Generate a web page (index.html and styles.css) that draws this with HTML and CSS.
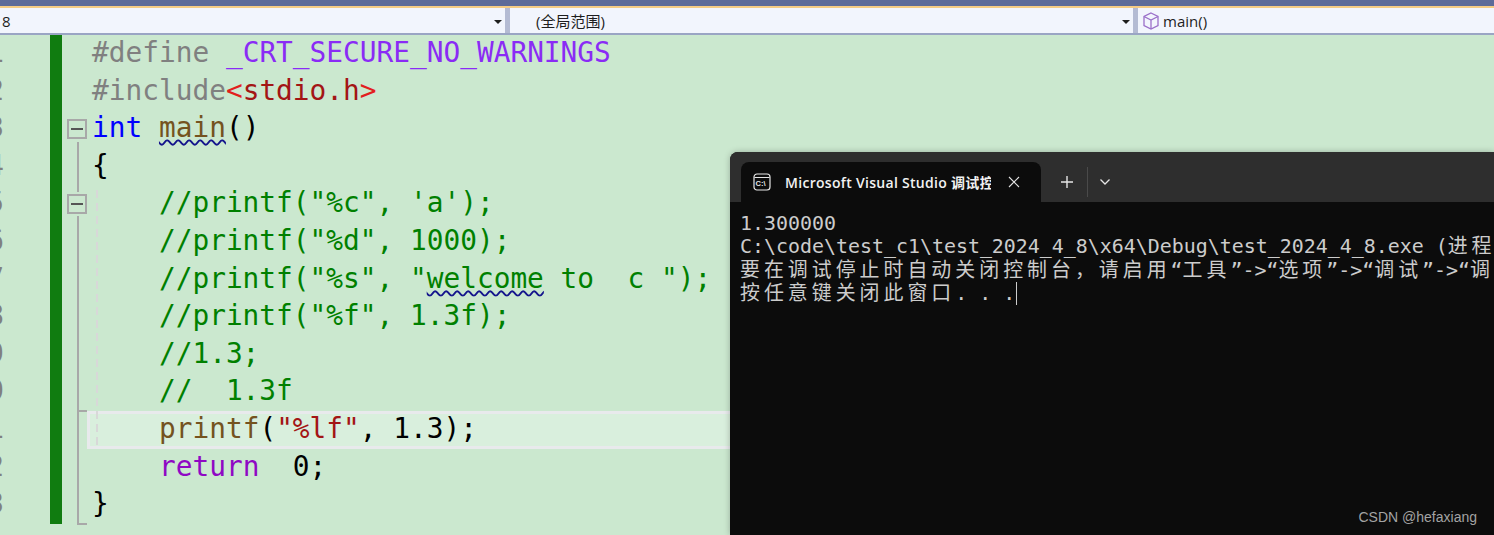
FILE: index.html
```html
<!DOCTYPE html>
<html lang="zh-CN">
<head>
<meta charset="utf-8">
<title>Visual Studio</title>
<link rel="stylesheet" href="styles.css">
</head>
<body>
<div class="topbar"></div>
<div class="navbar">
  <div class="combo combo-file"><span class="combo-text first">8</span><span class="arrow"></span></div>
  <div class="combo combo-scope"><span class="combo-text scope">(全局范围)</span><span class="arrow"></span></div>
  <div class="combo combo-member">
    <svg class="cube" width="16" height="18" viewBox="0 0 16 18" fill="none" stroke="#9a6fc9" stroke-width="1.3"><path d="M8 1 L15 4.5 V13.5 L8 17 L1 13.5 V4.5 Z"/><path d="M1 4.5 L8 8 L15 4.5 M8 8 V17"/></svg>
    <span class="combo-text">main()</span>
  </div>
</div>
<main class="editor">
  <div class="numbers">
    <div class="num">1</div><div class="num">2</div><div class="num">3</div><div class="num">4</div><div class="num">5</div><div class="num">6</div><div class="num">7</div><div class="num">8</div><div class="num">9</div><div class="num">0</div><div class="num">1</div><div class="num">2</div><div class="num">3</div>
  </div>
  <div class="changebar"></div>
  <div class="folds">
    <div class="fc"></div>
    <div class="fc"></div>
    <div class="fc rail-start"><span class="foldbox"></span></div>
    <div class="fc rail"></div>
    <div class="fc rail"><span class="foldbox"></span></div>
    <div class="fc rail"></div>
    <div class="fc rail"></div>
    <div class="fc rail"></div>
    <div class="fc rail"></div>
    <div class="fc rail tick"></div>
    <div class="fc rail"></div>
    <div class="fc rail"></div>
    <div class="fc rail tick"></div>
  </div>
  <div class="code">
    <div class="guide"></div>
    <div class="line"><span class="pp">#define</span> <span class="macro">_CRT_SECURE_NO_WARNINGS</span></div>
    <div class="line"><span class="pp">#include</span><span class="angle">&lt;</span><span class="str">stdio.h</span><span class="angle">&gt;</span></div>
    <div class="line"><span class="kw">int</span> <span class="fn squig">main</span>()</div>
    <div class="line">{</div>
    <div class="line"><span class="cm">    //printf("%c", 'a');</span></div>
    <div class="line"><span class="cm">    //printf("%d", 1000);</span></div>
    <div class="line"><span class="cm">    //printf("%s", "<span class="squig">welcome</span> to  c ");</span></div>
    <div class="line"><span class="cm">    //printf("%f", 1.3f);</span></div>
    <div class="line"><span class="cm">    //1.3;</span></div>
    <div class="line"><span class="cm">    //  1.3f</span></div>
    <div class="line current">    <span class="fn">printf</span>(<span class="str">"%lf"</span>, 1.3);</div>
    <div class="line">    <span class="ret">return</span>  0;</div>
    <div class="line">}</div>
  </div>
</main>
<section class="console">
  <div class="tabstrip">
    <div class="tab">
      <svg class="tabicon" width="18" height="18" viewBox="0 0 18 18" fill="none"><rect x="1" y="1" width="16" height="16" rx="3" stroke="#e8e8e8" stroke-width="1.2"/><path d="M1.5 4.5 H16.5" stroke="#e8e8e8" stroke-width="1.2"/><text x="2.6" y="13.4" font-size="7.5" fill="#e8e8e8" font-family="Liberation Sans, sans-serif" font-weight="700">C:\</text></svg>
      <span class="tabtitle">Microsoft Visual Studio 调试控制台</span>
      <svg class="tabclose" width="12" height="12" viewBox="0 0 12 12" stroke="#e0e0e0" stroke-width="1.1"><path d="M1 1 L11 11 M11 1 L1 11"/></svg>
    </div>
    <svg class="plus" width="14" height="14" viewBox="0 0 14 14" stroke="#e6e6e6" stroke-width="1.4"><path d="M7 1 V13 M1 7 H13"/></svg>
    <div class="tabsep"></div>
    <svg class="chev" width="12" height="8" viewBox="0 0 12 8" fill="none" stroke="#e6e6e6" stroke-width="1.3"><path d="M1.5 1.5 L6 6 L10.5 1.5"/></svg>
  </div>
  <div class="output">
    <div class="out">1.300000</div>
    <div class="out">C:\code\test_c1\test_2024_4_8\x64\Debug\test_2024_4_8.exe (<span class="cjk">进程</span></div>
    <div class="out"><span class="cjk">要在调试停止时自动关闭控制台，请启用</span>“<span class="cjk">工具</span>”-&gt;“<span class="cjk">选项</span>”-&gt;“<span class="cjk">调试</span>”-&gt;“<span class="cjk">调</span></div>
    <div class="out"><span class="cjk">按任意键关闭此窗口</span>. . .<span class="caret"></span></div>
  </div>
  <div class="watermark">CSDN @hefaxiang</div>
</section>
</body>
</html>
```
FILE: styles.css
```css
* { box-sizing: border-box; }
html, body { margin: 0; height: 535px; overflow: hidden; }
body { position: relative; background: #cbe8cf; display: flex; flex-direction: column; }

.topbar { height: 8px; flex: none; background: #5d6b99; border-bottom: 2px solid #f5cc84; }
.navbar { height: 27px; flex: none; display: flex; gap: 5px; background: #b4bbd3; border-bottom: 2px solid #9aa5c4; }
.combo { display: flex; align-items: center; background: #f2f5fd; height: 25px; position: relative; font: 15px "Open Sans", "Noto Sans CJK SC", sans-serif; color: #1e1e1e; }
.combo-file { width: 505px; }
.combo-scope { width: 623px; }
.combo-member { flex: 1; padding-left: 5px; gap: 4px; }
.combo-text { white-space: pre; }
.first { padding-left: 2px; }
.scope { padding-left: 26px; }
.arrow { margin-left: auto; margin-right: 3px; width: 0; height: 0; border-left: 4px solid transparent; border-right: 4px solid transparent; border-top: 4px solid #1e1e1e; margin-top: 2px; }
.cube { flex: none; }

.editor { flex: 1; display: flex; min-height: 0; font-family: "DejaVu Sans Mono", monospace; font-size: 27.8px; }
.numbers { width: 4px; flex: none; margin-right: 46px; display: flex; flex-direction: column; align-items: flex-end; color: #808080; }
.num { height: 37.6px; line-height: 35.6px; }
.changebar { width: 12px; height: 489px; flex: none; background: #107c10; }
.folds { width: 25px; margin-left: 5px; flex: none; display: flex; flex-direction: column; }
.fc { height: 37.6px; position: relative; }
.rail::before { content: ""; position: absolute; left: 10px; top: 0; bottom: 0; width: 2px; background: #a8a8a8; }
.rail-start::before { content: ""; position: absolute; left: 10px; top: 32px; bottom: 0; width: 2px; background: #a8a8a8; }
.tick::after { content: ""; position: absolute; left: 10px; right: 5px; bottom: -1px; height: 2px; background: #a8a8a8; }
.foldbox { position: absolute; left: 0; top: 9px; width: 20px; height: 20px; border: 2px solid #a8a8a8; background: #cbe8cf; box-shadow: 0 0 0 2px #cbe8cf; z-index: 1; }
.foldbox::after { content: ""; position: absolute; left: 2px; right: 2px; top: 7px; height: 2px; background: #555; }

.code { flex: 1; position: relative; color: #000; min-width: 0; }
.line { height: 37.6px; line-height: 35.6px; white-space: pre; }
.current { margin-left: -5px; padding-left: 5px; background: #d9efdd; box-shadow: inset 0 0 0 3px #e8eaec; }
.guide { position: absolute; left: 4px; top: 155px; height: 260px; width: 2px; z-index: 1; background: repeating-linear-gradient(to bottom, #d8d8d8 0 8px, transparent 8px 13px); }
.pp { color: #808080; }
.macro { color: #8a2bf5; }
.angle { color: #e21f1f; }
.str { color: #a31515; }
.kw { color: #0000ff; }
.fn { color: #74531f; }
.cm { color: #008000; }
.ret { color: #8f08c4; }
.squig { text-decoration: underline wavy #14148c 1.5px; text-underline-offset: 2px; }

.console { position: absolute; left: 730px; top: 152px; width: 764px; height: 383px; background: #0c0c0c; border-radius: 8px 0 0 0; overflow: hidden; box-shadow: 0 0 6px rgba(0,0,0,.25); }
.tabstrip { height: 50px; background: #2e2e2e; display: flex; align-items: center; padding-top: 10px; padding-left: 11px; }
.tab { width: 300px; height: 40px; background: #0c0c0c; border-radius: 8px 8px 0 0; display: flex; align-items: center; padding-left: 12px; flex: none; }
.tabicon { flex: none; }
.tabtitle { width: 206px; margin-left: 14px; overflow: hidden; white-space: nowrap; font: 600 14px "Open Sans", "Noto Sans CJK SC", sans-serif; letter-spacing: 0.3px; color: #f2f2f2; }
.tabclose { margin-left: 17px; flex: none; }
.plus { margin-left: 19px; flex: none; }
.tabsep { width: 1px; height: 30px; background: #4a4a4a; margin-left: 13px; flex: none; }
.chev { margin-left: 11px; flex: none; }
.output { padding: 10px 0 0 10px; font-family: "DejaVu Sans Mono", "Noto Sans CJK SC", monospace; font-size: 19.93px; color: #cccccc; }
.out { height: 23.4px; line-height: 23.4px; white-space: pre; }
.cjk { letter-spacing: 4px; }
.caret { display: inline-block; width: 1px; height: 23px; background: #cccccc; vertical-align: -5px; margin-left: 1px; }
.watermark { position: absolute; right: 17px; bottom: 10px; font: 14px "Liberation Sans", sans-serif; color: #a3a3a3; }
```
